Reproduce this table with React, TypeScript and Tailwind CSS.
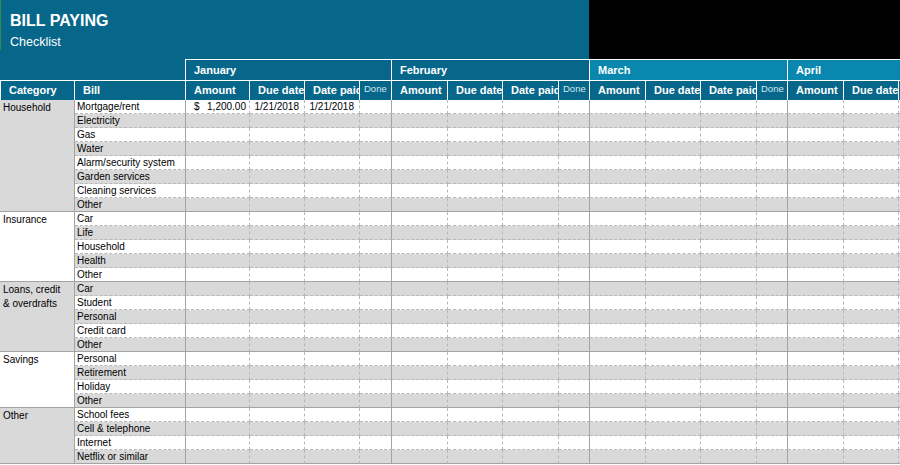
import React from "react";

const GRID =
  "grid grid-cols-[75px_111px_64px_55px_55px_32px_56px_55px_56px_31px_56px_55px_56px_31px_56px_55px_56px_31px]";

type Group = { name: React.ReactNode; bills: string[] };

const groups: Group[] = [
  {
    name: "Household",
    bills: [
      "Mortgage/rent",
      "Electricity",
      "Gas",
      "Water",
      "Alarm/security system",
      "Garden services",
      "Cleaning services",
      "Other",
    ],
  },
  { name: "Insurance", bills: ["Car", "Life", "Household", "Health", "Other"] },
  {
    name: (
      <>
        Loans, credit
        <br />
        &amp; overdrafts
      </>
    ),
    bills: ["Car", "Student", "Personal", "Credit card", "Other"],
  },
  { name: "Savings", bills: ["Personal", "Retirement", "Holiday", "Other"] },
  {
    name: "Other",
    bills: ["School fees", "Cell & telephone", "Internet", "Netflix or similar"],
  },
];

const spanClass: Record<number, string> = {
  4: "row-span-4",
  5: "row-span-5",
  8: "row-span-8",
};

const months = ["January", "February", "March", "April"];
const subHeads = ["Amount", "Due date", "Date paid", "Done"];

export default function App() {
  let rowIndex = 0;
  const dataCells: React.ReactNode[] = [];

  groups.forEach((g, gi) => {
    g.bills.forEach((bill, bi) => {
      const idx = rowIndex++;
      const gray = idx % 2 === 1;
      const last = bi === g.bills.length - 1;
      const bg = gray ? "bg-[#d9d9d9]" : "bg-white";
      const bottom = last
        ? "border-b border-b-[#a3a3a3] [border-bottom-style:solid]"
        : "border-b border-b-[#b8b8b8] [border-bottom-style:dashed]";

      if (bi === 0) {
        dataCells.push(
          <div
            key={`cat-${gi}`}
            className={`${spanClass[g.bills.length]} ${
              gi % 2 === 0 ? "bg-[#d9d9d9]" : "bg-white"
            } border-r border-b border-[#a3a3a3] pl-[3px] pt-[1px] text-[10px] leading-[14px] text-black`}
          >
            {g.name}
          </div>
        );
      }

      dataCells.push(
        <div
          key={`bill-${idx}`}
          className={`${bg} ${bottom} border-r border-r-[#a3a3a3] [border-right-style:solid] h-[14px] pl-[2px] text-[10px] leading-[13px] text-black whitespace-nowrap overflow-hidden`}
        >
          {bill}
        </div>
      );

      for (let m = 0; m < 4; m++) {
        for (let c = 0; c < 4; c++) {
          const right =
            c === 3
              ? "border-r border-r-[#a3a3a3] [border-right-style:solid]"
              : "border-r border-r-[#b8b8b8] [border-right-style:dashed]";
          let content: React.ReactNode = null;
          if (idx === 0 && m === 0) {
            if (c === 0)
              content = (
                <div className="flex justify-between pl-[8px] pr-[3px]">
                  <span>$</span>
                  <span>1,200.00</span>
                </div>
              );
            if (c === 1 || c === 2)
              content = <div className="text-right pr-[5px]">1/21/2018</div>;
          }
          dataCells.push(
            <div
              key={`d-${idx}-${m}-${c}`}
              className={`${bg} ${bottom} ${right} h-[14px] text-[10px] leading-[13px] text-black whitespace-nowrap overflow-hidden`}
            >
              {content}
            </div>
          );
        }
      }
    });
  });

  return (
    <div
      className="w-[900px] h-[465px] overflow-hidden bg-white"
      style={{ fontFamily: '"Liberation Sans", Arial, sans-serif' }}
    >
      {/* Title band */}
      <div className="flex h-[59px]">
        <div className="flex w-[589px] bg-[#07678a]">
          <div className="w-[1px] h-[50px] bg-[#2f8a4e]" />
          <div className="pl-[9px] pt-[11px]">
            <div className="text-[16px] leading-[20px] font-bold text-white">
              BILL PAYING
            </div>
            <div className="text-[12.5px] leading-[16px] mt-[3px] text-white">
              Checklist
            </div>
          </div>
        </div>
        <div className="flex-1 bg-black" />
      </div>

      <div className={`${GRID} w-[955px]`}>
        {/* Month row */}
        <div className="col-span-2 h-[22px] bg-[#07678a] border-r border-b border-white" />
        {months.map((m, i) => (
          <div
            key={m}
            className={`col-span-4 h-[22px] border-t border-r border-b border-white ${
              i < 2 ? "bg-[#07678a]" : "bg-[#0a87ae]"
            } pl-[8px] text-[11px] leading-[20px] font-bold text-white whitespace-nowrap overflow-hidden`}
          >
            {m}
          </div>
        ))}

        {/* Column header row */}
        <div className="h-[19px] bg-[#07678a] border-l border-r border-white pl-[8px] text-[11px] leading-[19px] font-bold text-white">
          Category
        </div>
        <div className="h-[19px] bg-[#07678a] border-r border-white pl-[8px] text-[11px] leading-[19px] font-bold text-white">
          Bill
        </div>
        {months.map((m) =>
          subHeads.map((s) =>
            s === "Done" ? (
              <div
                key={`${m}-${s}`}
                className="h-[19px] bg-[#07678a] border-r border-white pl-[4px] pt-[2px] text-[9.5px] leading-[12px] text-[#d3e9f1] whitespace-nowrap overflow-hidden"
              >
                Done
              </div>
            ) : (
              <div
                key={`${m}-${s}`}
                className="h-[19px] bg-[#07678a] border-r border-white pl-[8px] text-[11px] leading-[19px] font-bold text-white whitespace-nowrap overflow-hidden"
              >
                {s}
              </div>
            )
          )
        )}

        {dataCells}
      </div>
    </div>
  );
}
